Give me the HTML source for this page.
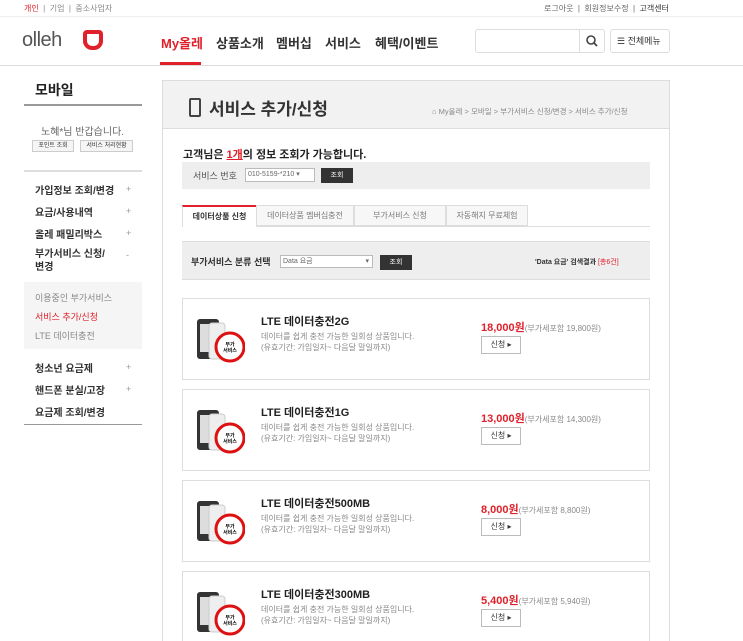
<!DOCTYPE html>
<html style="height:641px;overflow:hidden"><head><meta charset="utf-8"><style>
*{margin:0;padding:0;box-sizing:border-box}
html{width:743px;height:641px;overflow:hidden}
body{width:743px;height:641px;overflow:hidden;background:#fff;font-family:"Liberation Sans","Noto Sans CJK KR",sans-serif;color:#333;position:relative}
.a{position:absolute;white-space:nowrap}
.top{font-size:8px;color:#888}
.nav{font-size:13px;font-weight:bold;color:#333}
.side{font-size:10px;font-weight:bold;color:#333}
.pl{font-size:9px;color:#999}
.card{position:absolute;left:182px;width:468px;height:82px;border:1px solid #ddd;background:#fff}
.card .t{position:absolute;left:78px;top:14px;font-size:11px;font-weight:bold;color:#222}
.card .d{position:absolute;left:78px;top:32px;font-size:8px;color:#888;line-height:11px}
.card .p{position:absolute;left:298px;top:20px;font-size:11px;font-weight:bold;color:#e0202a}
.card .p span{font-size:8px;color:#888;font-weight:normal}
.card .b{position:absolute;left:298px;top:37px;width:40px;height:18px;border:1px solid #bbb;font-size:8px;text-align:center;line-height:16px;background:#fff}
.ph{position:absolute;left:12px;top:18px;width:50px;height:48px}
</style></head><body>
<div class="a top" style="left:24px;top:3px"><span style="color:#e0202a">개인</span> &nbsp;|&nbsp; 기업 &nbsp;|&nbsp; 중소사업자</div>
<div class="a top" style="left:544px;top:3px;color:#666">로그아웃 &nbsp;|&nbsp; 회원정보수정 &nbsp;|&nbsp; <span style="color:#333">고객센터</span></div>
<div style="position:absolute;left:0;top:16px;width:743px;height:1px;background:#eee"></div>
<div class="a" style="left:22px;top:29px;font-size:20px;color:#555;letter-spacing:-0.5px">olleh</div>
<div class="a" style="left:83px;top:30px;width:20px;height:20px;border:4px solid #e0202a;border-radius:4px 4px 9px 9px"></div>
<div class="a nav" style="left:161px;top:33px;color:#e0202a">My올레</div>
<div style="position:absolute;left:160px;top:62px;width:41px;height:3px;background:#e0202a"></div>
<div class="a nav" style="left:216px;top:33px">상품소개</div>
<div class="a nav" style="left:276px;top:33px">멤버십</div>
<div class="a nav" style="left:325px;top:33px">서비스</div>
<div class="a nav" style="left:375px;top:33px">혜택/이벤트</div>
<div class="a" style="left:475px;top:29px;width:130px;height:24px;border:1px solid #ddd;border-radius:3px"></div>
<div class="a" style="left:579px;top:29px;width:1px;height:24px;background:#ddd"></div>
<svg class="a" style="left:585px;top:34px" width="14" height="14"><circle cx="6" cy="6" r="4" fill="none" stroke="#444" stroke-width="1.6"/><line x1="9" y1="9" x2="12" y2="12" stroke="#444" stroke-width="1.8"/></svg>
<div class="a" style="left:610px;top:29px;width:60px;height:24px;border:1px solid #ddd;border-radius:3px;font-size:9px;line-height:22px;padding-left:6px;color:#333">☰ 전체메뉴</div>
<div style="position:absolute;left:0;top:65px;width:743px;height:1px;background:#ddd"></div>

<div class="a" style="left:35px;top:80px;font-size:14px;font-weight:bold;color:#222">모바일</div>
<div style="position:absolute;left:24px;top:104px;width:118px;height:2px;background:#999"></div>
<div class="a" style="left:41px;top:123px;font-size:10px;color:#666">노혜*님 반갑습니다.</div>
<div class="a" style="left:32px;top:140px;width:42px;height:12px;border:1px solid #ccc;background:#f5f5f5;font-size:6px;text-align:center;line-height:10px">포인트 조회</div>
<div class="a" style="left:80px;top:140px;width:53px;height:12px;border:1px solid #ccc;background:#f5f5f5;font-size:6px;text-align:center;line-height:10px">서비스 처리현황</div>
<div style="position:absolute;left:24px;top:170px;width:118px;height:2px;background:#ddd"></div>
<div class="a side" style="left:35px;top:182px">가입정보 조회/변경</div><div class="a pl" style="left:126px;top:184px">+</div>
<div class="a side" style="left:35px;top:204px">요금/사용내역</div><div class="a pl" style="left:126px;top:206px">+</div>
<div class="a side" style="left:35px;top:226px">올레 패밀리박스</div><div class="a pl" style="left:126px;top:228px">+</div>
<div class="a side" style="left:35px;top:248px;line-height:13px">부가서비스 신청/<br>변경</div><div class="a pl" style="left:126px;top:250px">-</div>
<div class="a" style="left:24px;top:282px;width:118px;height:67px;background:#f5f5f5"></div>
<div class="a" style="left:35px;top:291px;font-size:9px;color:#888">이용중인 부가서비스</div>
<div class="a" style="left:35px;top:310px;font-size:9px;color:#e0202a">서비스 추가/신청</div>
<div class="a" style="left:35px;top:329px;font-size:9px;color:#888">LTE 데이터충전</div>
<div class="a side" style="left:35px;top:360px">청소년 요금제</div><div class="a pl" style="left:126px;top:362px">+</div>
<div class="a side" style="left:35px;top:382px">핸드폰 분실/고장</div><div class="a pl" style="left:126px;top:384px">+</div>
<div class="a side" style="left:35px;top:404px">요금제 조회/변경</div>
<div style="position:absolute;left:24px;top:424px;width:118px;height:1px;background:#999"></div>

<div class="a" style="left:162px;top:80px;width:508px;height:561px;border-left:1px solid #ddd;border-right:1px solid #ddd"></div>
<div class="a" style="left:162px;top:80px;width:508px;height:49px;background:#f2f2f2;border:1px solid #ddd"></div>
<div class="a" style="left:189px;top:98px;width:12px;height:19px;border:2px solid #444;border-radius:2px"></div>
<div class="a" style="left:209px;top:95px;font-size:17px;font-weight:bold;color:#333">서비스 추가/신청</div>
<div class="a" style="left:432px;top:106px;font-size:7.5px;color:#888">⌂ My올레 &gt; 모바일 &gt; 부가서비스 신청/변경 &gt; 서비스 추가/신청</div>
<div class="a" style="left:183px;top:146px;font-size:11px;font-weight:bold;color:#222">고객님은 <span style="color:#e0202a;text-decoration:underline">1개</span>의 정보 조회가 가능합니다.</div>
<div class="a" style="left:182px;top:162px;width:468px;height:27px;background:#eee"></div>
<div class="a" style="left:193px;top:169px;font-size:9px;color:#555">서비스 번호</div>
<div class="a" style="left:245px;top:168px;width:70px;height:14px;border:1px solid #bbb;background:#fff;font-size:7px;line-height:12px;padding-left:2px;color:#666">010-5159-*210 ▾</div>
<div class="a" style="left:321px;top:168px;width:32px;height:15px;background:#333;color:#fff;font-size:7px;text-align:center;line-height:15px">조회</div>
<div class="a" style="left:182px;top:226px;width:468px;height:1px;background:#ddd"></div>
<div class="a" style="left:182px;top:205px;width:74px;height:22px;background:#fff;border-top:2px solid #e0202a;border-left:1px solid #ddd;font-size:8px;font-weight:bold;text-align:center;line-height:19px">데이터상품 신청</div>
<div class="a" style="left:256px;top:205px;width:98px;height:21px;background:#f7f7f7;border:1px solid #ddd;font-size:8px;color:#777;text-align:center;line-height:19px">데이터상품 멤버십충전</div>
<div class="a" style="left:354px;top:205px;width:92px;height:21px;background:#f7f7f7;border:1px solid #ddd;font-size:8px;color:#777;text-align:center;line-height:19px">부가서비스 신청</div>
<div class="a" style="left:446px;top:205px;width:82px;height:21px;background:#f7f7f7;border:1px solid #ddd;font-size:8px;color:#777;text-align:center;line-height:19px">자동해지 무료체험</div>
<div class="a" style="left:182px;top:241px;width:468px;height:39px;background:#eee;border-top:1px solid #ddd;border-bottom:1px solid #ddd"></div>
<div class="a" style="left:191px;top:255px;font-size:9px;font-weight:bold;color:#333">부가서비스 분류 선택</div>
<div class="a" style="left:280px;top:255px;width:93px;height:13px;border:1px solid #bbb;background:#fff;font-size:7px;line-height:11px;padding-left:2px;color:#666">Data 요금<span style="float:right;padding-right:3px">▾</span></div>
<div class="a" style="left:380px;top:255px;width:32px;height:15px;background:#333;color:#fff;font-size:7px;text-align:center;line-height:15px">조회</div>
<div class="a" style="left:535px;top:257px;font-size:7px;color:#333;font-weight:bold">'Data 요금' 검색결과 <span style="color:#e0202a;font-weight:normal">[총6건]</span></div>

<div class="card" style="top:298px"><svg class="ph" viewBox="0 0 50 48"><rect x="2" y="2" width="22" height="40" rx="3" fill="#333"/><rect x="5" y="7" width="16" height="28" fill="#ddd"/><rect x="14" y="6" width="16" height="36" rx="3" fill="#eee" stroke="#ccc"/><circle cx="35" cy="30" r="14" fill="#fff" stroke="#d11" stroke-width="3"/><text x="35" y="29" font-size="5" text-anchor="middle" font-weight="bold">부가</text><text x="35" y="35" font-size="5" text-anchor="middle" font-weight="bold">서비스</text></svg><div class="t">LTE 데이터충전2G</div><div class="d">데이터를 쉽게 충전 가능한 일회성 상품입니다.<br>(유효기간: 가입일자~ 다음달 말일까지)</div><div class="p">18,000원<span>(부가세포함 19,800원)</span></div><div class="b">신청 ▸</div></div>
<div class="card" style="top:389px"><svg class="ph" viewBox="0 0 50 48"><rect x="2" y="2" width="22" height="40" rx="3" fill="#333"/><rect x="5" y="7" width="16" height="28" fill="#ddd"/><rect x="14" y="6" width="16" height="36" rx="3" fill="#eee" stroke="#ccc"/><circle cx="35" cy="30" r="14" fill="#fff" stroke="#d11" stroke-width="3"/><text x="35" y="29" font-size="5" text-anchor="middle" font-weight="bold">부가</text><text x="35" y="35" font-size="5" text-anchor="middle" font-weight="bold">서비스</text></svg><div class="t">LTE 데이터충전1G</div><div class="d">데이터를 쉽게 충전 가능한 일회성 상품입니다.<br>(유효기간: 가입일자~ 다음달 말일까지)</div><div class="p">13,000원<span>(부가세포함 14,300원)</span></div><div class="b">신청 ▸</div></div>
<div class="card" style="top:480px"><svg class="ph" viewBox="0 0 50 48"><rect x="2" y="2" width="22" height="40" rx="3" fill="#333"/><rect x="5" y="7" width="16" height="28" fill="#ddd"/><rect x="14" y="6" width="16" height="36" rx="3" fill="#eee" stroke="#ccc"/><circle cx="35" cy="30" r="14" fill="#fff" stroke="#d11" stroke-width="3"/><text x="35" y="29" font-size="5" text-anchor="middle" font-weight="bold">부가</text><text x="35" y="35" font-size="5" text-anchor="middle" font-weight="bold">서비스</text></svg><div class="t">LTE 데이터충전500MB</div><div class="d">데이터를 쉽게 충전 가능한 일회성 상품입니다.<br>(유효기간: 가입일자~ 다음달 말일까지)</div><div class="p">8,000원<span>(부가세포함 8,800원)</span></div><div class="b">신청 ▸</div></div>
<div class="card" style="top:571px;height:70px;border-bottom:none"><svg class="ph" viewBox="0 0 50 48"><rect x="2" y="2" width="22" height="40" rx="3" fill="#333"/><rect x="5" y="7" width="16" height="28" fill="#ddd"/><rect x="14" y="6" width="16" height="36" rx="3" fill="#eee" stroke="#ccc"/><circle cx="35" cy="30" r="14" fill="#fff" stroke="#d11" stroke-width="3"/><text x="35" y="29" font-size="5" text-anchor="middle" font-weight="bold">부가</text><text x="35" y="35" font-size="5" text-anchor="middle" font-weight="bold">서비스</text></svg><div class="t">LTE 데이터충전300MB</div><div class="d">데이터를 쉽게 충전 가능한 일회성 상품입니다.<br>(유효기간: 가입일자~ 다음달 말일까지)</div><div class="p">5,400원<span>(부가세포함 5,940원)</span></div><div class="b">신청 ▸</div></div>
</body></html>
